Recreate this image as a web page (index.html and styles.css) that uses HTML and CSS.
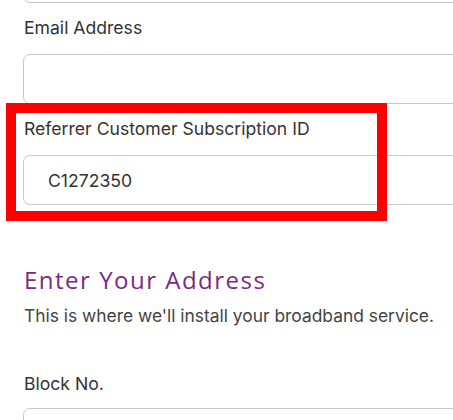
FILE: index.html
```html
<!DOCTYPE html>
<html lang="en">
<head>
<meta charset="utf-8">
<title>Registration</title>
<link rel="stylesheet" href="styles.css">
</head>
<body>
<div class="form">
  <div class="field field-first">
    <div class="input"></div>
  </div>
  <div class="field">
    <label class="label">Email Address</label>
    <div class="input"></div>
  </div>
  <div class="field field-highlight">
    <label class="label">Referrer Customer Subscription ID</label>
    <div class="input"><span class="value">C1272350</span></div>
    <div class="highlight"></div>
  </div>
  <section class="address">
    <h2 class="title">Enter Your Address</h2>
    <p class="subtitle">This is where we'll install your broadband service.</p>
  </section>
  <div class="field field-block">
    <label class="label">Block No.</label>
    <div class="input"></div>
  </div>
</div>
</body>
</html>
```

FILE: styles.css
```css
html, body {
  margin: 0;
  padding: 0;
  background: #ffffff;
  overflow: hidden;
}
body {
  width: 453px;
  height: 420px;
  font-family: Inter, "Liberation Sans", sans-serif;
  color: #333333;
}
.form {
  padding-left: 23px;
  width: 520px;
  display: flex;
  flex-direction: column;
}
.field {
  position: relative;
  display: flex;
  flex-direction: column;
  padding-top: 13px;
}
.field-first {
  margin-top: -60px;
}
.label {
  display: block;
  font-size: 17.6px;
  line-height: 24px;
  height: 24px;
  margin-bottom: 14px;
  padding-left: 1px;
  color: #333333;
}
.input {
  box-sizing: border-box;
  height: 50px;
  border: 1px solid #c8c8c8;
  border-radius: 7px;
  background: #ffffff;
  display: flex;
  align-items: center;
  padding-left: 24px;
}
.value {
  font-size: 17.6px;
  color: #333333;
}
.highlight {
  position: absolute;
  left: -17px;
  top: -1px;
  width: 381px;
  height: 118px;
  box-sizing: border-box;
  border: 10px solid #ff0000;
  pointer-events: none;
}
.address {
  padding-top: 60px;
}
.title {
  margin: 0;
  font-family: "Open Sans", "DejaVu Sans", sans-serif;
  font-weight: 400;
  font-size: 24px;
  line-height: 30px;
  letter-spacing: 1.5px;
  color: #7b2a83;
  padding-left: 1px;
}
.subtitle {
  margin: 8px 0 0;
  font-size: 17.4px;
  line-height: 26px;
  color: #444444;
  padding-left: 1px;
}
.field-block {
  padding-top: 43px;
}
.field-block .label {
  margin-bottom: 12px;
}
```
